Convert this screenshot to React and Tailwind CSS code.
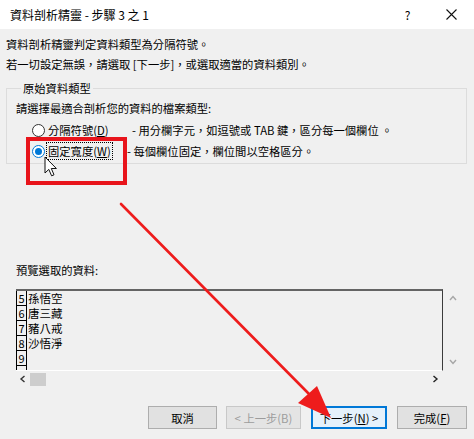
import React from "react";

function Chevron({ dir, color = "#a6a6a6", size = 8 }) {
  const paths = {
    up: "M1 6 L4 2.5 L7 6",
    down: "M1 2 L4 5.5 L7 2",
    left: "M5.5 1 L2 4 L5.5 7",
    right: "M2.5 1 L6 4 L2.5 7",
  };
  return (
    <svg width={size} height={size} viewBox="0 0 8 8" className="block">
      <path d={paths[dir]} fill="none" stroke={color} strokeWidth="1.4" />
    </svg>
  );
}

function Row({ n, text }) {
  return (
    <div className="flex h-[15px] items-stretch">
      <div className="w-[11px] shrink-0 border-x border-b border-black text-[11px] leading-[14px] text-center">
        {n}
      </div>
      <div className="pl-[1px] text-[11.5px] leading-[14px]">{text}</div>
    </div>
  );
}

export default function App() {
  return (
    <div className="relative w-[474px] h-[439px] overflow-hidden bg-[#f0f0f0] text-black text-[11.3px] leading-[20px] font-['Noto_Sans_CJK_TC','Noto_Sans_CJK_SC',sans-serif]">
      {/* Title bar */}
      <div className="flex h-[29px] items-center bg-white pl-[10px] pr-[17px]">
        <div className="text-[12px]">資料剖析精靈 - 步驟 3 之 1</div>
        <div className="ml-auto w-[7px] text-[12px] text-center">?</div>
        <div className="ml-[35px]">
          <svg width="11" height="11" viewBox="0 0 11 11" className="block">
            <path d="M0.5 0.5 L10.5 10.5 M10.5 0.5 L0.5 10.5" stroke="#111" strokeWidth="1.1" />
          </svg>
        </div>
      </div>

      {/* Body */}
      <div className="mt-[5px] h-[20px] pl-[6px]">資料剖析精靈判定資料類型為分隔符號。</div>
      <div className="h-[20px] pl-[6px]">若一切設定無誤，請選取 [下一步]，或選取適當的資料類別。</div>

      <fieldset className="mt-[4px] ml-[6px] w-[461px] border border-[#dcdcdc] pl-[9px] pb-[2px]">
        <legend className="ml-[5px] px-[2px] leading-[20px]">原始資料類型</legend>
        <div className="h-[20px]">請選擇最適合剖析您的資料的檔案類型:</div>
        <div className="mt-[2px] flex h-[20px] items-center pl-[16px]">
          <div className="h-[13px] w-[13px] rounded-full border border-[#333] bg-white"></div>
          <div className="w-[87px] pl-[3px]">
            分隔符號(<span className="underline">D</span>)
          </div>
          <div>- 用分欄字元，如逗號或 TAB 鍵，區分每一個欄位 。</div>
        </div>
        <div className="mt-[1px] flex h-[20px] items-center pl-[16px]">
          <div className="flex h-[13px] w-[13px] items-center justify-center rounded-full border border-[#0078d7] bg-white">
            <div className="h-[7px] w-[7px] rounded-full bg-[#0078d7]"></div>
          </div>
          <div className="w-[82px] pl-[1px]">
            <span className="inline-block h-[18px] border border-dotted border-black px-[1px] leading-[16px]">
              固定寬度(<span className="underline">W</span>)
            </span>
          </div>
          <div>- 每個欄位固定，欄位間以空格區分。</div>
        </div>
      </fieldset>

      <div className="mt-[96px] h-[20px] pl-[16px]">預覽選取的資料:</div>

      {/* Preview */}
      <div className="mt-[9px] ml-[16px] w-[447px]">
        <div className="flex">
          <div className="h-[82px] w-[427px] overflow-hidden border-t-2 border-t-[#646464] border-r border-r-[#3c3c3c] border-b border-b-white">
            <Row n="5" text="孫悟空" />
            <Row n="6" text="唐三藏" />
            <Row n="7" text="豬八戒" />
            <Row n="8" text="沙悟淨" />
            <Row n="9" text="" />
            <Row n="" text="" />
          </div>
          <div className="flex h-[82px] w-[20px] flex-col items-center justify-between py-[5px]">
            <Chevron dir="up" />
            <Chevron dir="down" />
          </div>
        </div>
        <div className="flex h-[16px] w-[427px] items-center">
          <div className="ml-[3px]">
            <Chevron dir="left" color="#333" />
          </div>
          <div className="ml-[3px] h-[13px] w-[16px] bg-[#cdcdcd]"></div>
          <div className="ml-auto mr-[4px]">
            <Chevron dir="right" color="#222" />
          </div>
        </div>
      </div>

      {/* Buttons */}
      <div className="mt-[19px] flex pl-[148px] text-[11.3px]">
        <div className="flex h-[23px] w-[69px] items-center justify-center border border-[#adadad] bg-[#e1e1e1]">取消</div>
        <div className="ml-[9px] flex h-[23px] w-[75px] items-center justify-center border border-[#c8c8c8] bg-[#e4e4e4] text-[#9c9c9c]">
          &lt; 上一步(B)
        </div>
        <div className="ml-[10px] flex h-[23px] w-[76px] items-center justify-center border-2 border-[#0078d7] bg-[#e5f1fb]">
          下一步(<span className="underline">N</span>) &gt;
        </div>
        <div className="ml-[10px] flex h-[23px] w-[70px] items-center justify-center border border-[#adadad] bg-[#e1e1e1]">
          完成(<span className="underline">F</span>)
        </div>
      </div>

      {/* Red highlight box */}
      <div className="absolute left-[26px] top-[137px] h-[48px] w-[101px] border-4 border-[#e8141b]"></div>

      {/* Mouse cursor */}
      <svg className="absolute left-[44px] top-[156px]" width="14" height="22" viewBox="0 0 14 22">
        <path
          d="M1 1 L1 17 L4.8 13.4 L7.6 19.8 L10 18.8 L7.3 12.5 L12.4 12.5 Z"
          fill="white"
          stroke="#111"
          strokeWidth="1"
          strokeLinejoin="round"
        />
      </svg>

      {/* Red arrow */}
      <svg className="pointer-events-none absolute inset-0" width="474" height="439" viewBox="0 0 474 439">
        <line x1="121" y1="204" x2="312" y2="397" stroke="#ee1c1c" strokeWidth="2.6" strokeLinecap="round" />
        <polygon points="331,418 298,403 317,386" fill="#ee1c1c" />
      </svg>
    </div>
  );
}
